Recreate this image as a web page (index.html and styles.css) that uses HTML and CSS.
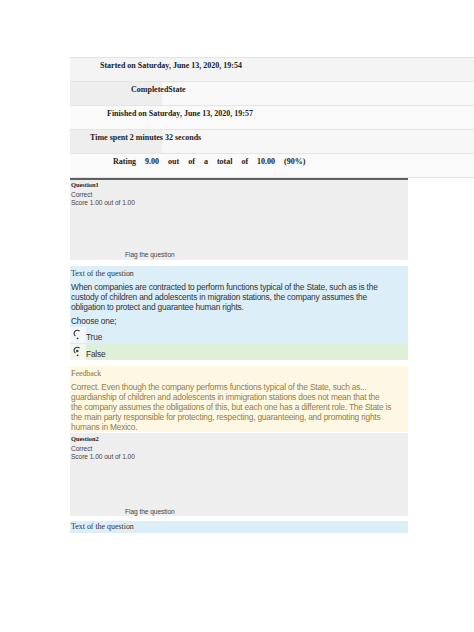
FILE: index.html
```html
<!DOCTYPE html>
<html lang="en">
<head>
<meta charset="utf-8">
<title>Quiz review</title>
<link rel="stylesheet" href="styles.css">
</head>
<body>
<div class="page">
  <div class="summary">
    <div class="srow r1"><div class="cell" style="padding-left:30px">Started on Saturday, June 13, 2020, 19:54</div></div>
    <div class="srow r2 split"><div class="lab"></div><div class="cell abs" style="padding-left:61px">CompletedState</div></div>
    <div class="srow r3"><div class="cell" style="padding-left:37px">Finished on Saturday, June 13, 2020, 19:57</div></div>
    <div class="srow r4 split"><div class="lab"></div><div class="cell abs" style="padding-left:20px">Time spent 2 minutes 32 seconds</div></div>
    <div class="srow r5"><div class="cell rating" style="padding-left:43px">Rating 9.00 out of a total of 10.00 (90%)</div></div>
  </div>

  <div class="content">
    <div class="qinfo">
      <div class="qno">Question1</div>
      <div class="state">Correct</div>
      <div class="grade">Score 1.00 out of 1.00</div>
      <div class="flag">Flag the question</div>
    </div>

    <div class="formulation">
      <h4 class="acc">Text of the question</h4>
      <p class="qtext">When companies are contracted to perform functions typical of the State, such as is the<br>custody of children and adolescents in migration stations, the company assumes the<br>obligation to protect and guarantee human rights.</p>
      <p class="prompt">Choose one;</p>
      <div class="answer">
        <div class="opt">
          <span class="radio"><svg width="10" height="12" viewBox="0 0 10 12"><path d="M6.6 2.2 A3.2 3.2 0 1 0 2.4 7" fill="none" stroke="#333" stroke-width="1.1"/><circle cx="4.6" cy="9.3" r="0.9" fill="#333"/></svg></span>
          <span class="olabel">True</span>
        </div>
        <div class="opt chosen">
          <span class="radio"><svg width="10" height="12" viewBox="0 0 10 12"><path d="M6.6 2.2 A3.2 3.2 0 1 0 2.4 7" fill="none" stroke="#333" stroke-width="1.1"/><circle cx="4.3" cy="5" r="1.2" fill="#333"/><circle cx="4.6" cy="9.3" r="0.9" fill="#333"/></svg></span>
          <span class="olabel">False</span>
        </div>
      </div>
    </div>

    <div class="outcome">
      <h4 class="acc">Feedback</h4>
      <p class="fb">Correct. Even though the company performs functions typical of the State, such as...<br>guardianship of children and adolescents in immigration stations does not mean that the<br>the company assumes the obligations of this, but each one has a different role. The State is<br>the main party responsible for protecting, respecting, guaranteeing, and promoting rights<br>humans in Mexico.</p>
    </div>

    <div class="qinfo q2">
      <div class="qno">Question2</div>
      <div class="state">Correct</div>
      <div class="grade">Score 1.00 out of 1.00</div>
      <div class="flag">Flag the question</div>
    </div>

    <div class="formulation short">
      <h4 class="acc big">Text of the question</h4>
    </div>
  </div>
</div>
</body>
</html>
```

FILE: styles.css
```css
html, body {
  margin: 0;
  padding: 0;
  background: #ffffff;
}

.page {
  padding-top: 57px;
  padding-left: 70px;
  font-family: "Liberation Sans", Arial, sans-serif;
  color: #333;
}

/* attempt summary table */
.summary {
  border-top: 1px solid #e4e4e4;
}

.srow {
  height: 23px;
  border-bottom: 1px solid #e4e4e4;
  display: flex;
  align-items: flex-start;
  position: relative;
  font-family: "Liberation Serif", "Times New Roman", serif;
  font-weight: bold;
  font-size: 8px;
  line-height: 10px;
  color: #222;
}

.cell {
  padding-top: 3px;
}

.r1 { background: #f4f4f4; }
.r2 { background: #f9f9f9; }
.r3 { background: #fafafa; }
.r4 { background: #f7f7f7; }
.r5 { background: #fafafa; }

.srow .lab {
  width: 92px;
  align-self: stretch;
  background: #eeeeee;
}

.cell.abs {
  position: absolute;
  left: 0;
  top: 0;
}

.rating {
  word-spacing: 7px;
}

/* question blocks */
.content {
  width: 338px;
}

.qinfo {
  background: #eeeeee;
  border-top: 2px solid #5f5f5f;
  height: 82px;
  position: relative;
  padding: 0 1px;
  box-sizing: border-box;
}

.qinfo.q2 {
  border-top: none;
  margin-top: 1px;
  height: 83px;
  padding-top: 1px;
}

.qno {
  font-family: "Liberation Serif", "Times New Roman", serif;
  font-weight: bold;
  font-size: 6.4px;
  line-height: 9px;
  color: #222;
  margin-bottom: 2px;
}

.state, .grade {
  font-size: 6.6px;
  line-height: 8px;
  letter-spacing: -0.05px;
  color: #444;
}

.flag {
  position: absolute;
  left: 55px;
  bottom: 1px;
  font-size: 6.6px;
  line-height: 8px;
  letter-spacing: -0.05px;
  color: #444;
}

.q2 .flag {
  bottom: 0;
}

.formulation {
  margin-top: 6px;
  background: #dceef7;
  padding: 3px 0 0 1px;
}

.acc {
  margin: 0;
  font-family: "Liberation Serif", "Times New Roman", serif;
  font-weight: normal;
  font-size: 7.9px;
  color: #333;
  line-height: 10px;
}

/* body copy is set slightly tight */
.qtext, .prompt, .olabel, .fb {
  font-size: 8.4px;
  letter-spacing: -0.2px;
}

.qtext {
  margin: 3px 0 0;
  line-height: 10px;
  color: #333;
  white-space: nowrap;
}

.prompt {
  margin: 4px 0 0;
  line-height: 10px;
}

.answer {
  margin-left: -1px;
}

.opt {
  display: flex;
  align-items: center;
  height: 17px;
}

.radio {
  width: 16px;
  height: 16px;
  background: #f4f8fa;
  display: flex;
  align-items: center;
  justify-content: center;
}

.opt.chosen {
  background: #dff0d8;
}

.chosen .radio { background: #f2f7f0; }

.olabel {
  padding-top: 4px;
}

.outcome {
  margin-top: 6px;
  background: #fcf8e3;
  padding: 3px 0 0 1px;
  height: 63px;
  color: #8a6d3b;
}

.outcome .acc {
  color: #8a6d3b;
}

.fb {
  margin: 3px 0 0;
  line-height: 10px;
  color: #9a7c45;
  white-space: nowrap;
}

.formulation.short {
  margin-top: 5px;
  padding: 0 0 0 1px;
  height: 12px;
}

.acc.big {
  font-size: 7.9px;
  line-height: 12px;
}
```
